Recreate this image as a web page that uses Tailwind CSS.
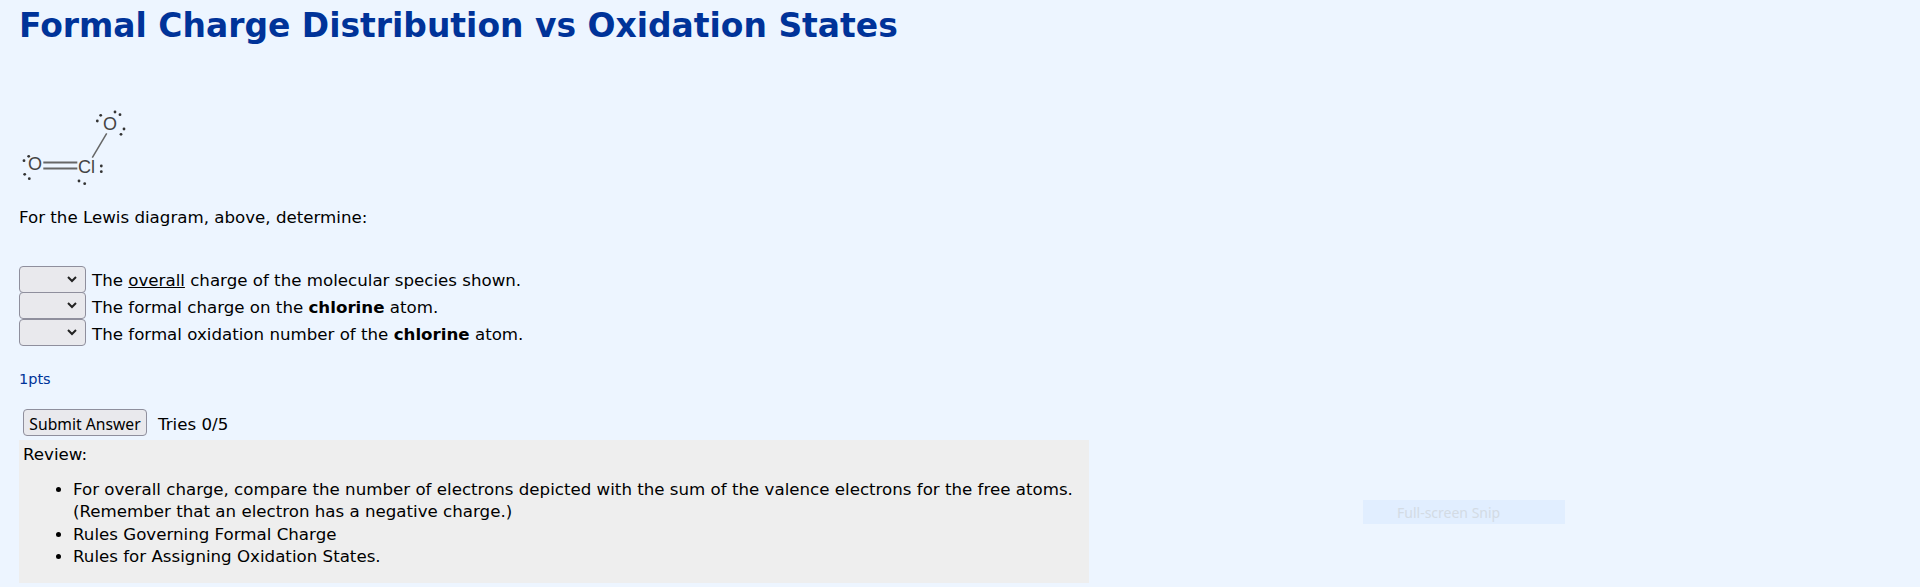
<!DOCTYPE html>
<html lang="en">
<head>
<meta charset="utf-8">
<script src="https://cdn.jsdelivr.net/npm/@tailwindcss/browser@4"></script>
<title>Formal Charge</title>
</head>
<body class="relative h-[587px] overflow-hidden bg-[#edf5ff] font-['DejaVu_Sans','Verdana',sans-serif] text-[16.67px] text-black">
<main class="pl-[19px]">
  <h1 class="pt-[5px] text-[32.95px] leading-[42px] font-bold text-[#003399]">Formal Charge Distribution vs Oxidation States</h1>
  <svg class="mt-[43px] -ml-[19px] block" width="160" height="110" viewBox="0 0 160 110">
    <g fill="#444" font-family="Liberation Sans, sans-serif" font-size="18">
      <text x="110" y="39.5" text-anchor="middle">O</text>
      <text x="35" y="80" text-anchor="middle">O</text>
      <text x="86.5" y="82.5" text-anchor="middle">Cl</text>
    </g>
    <g stroke="#666" fill="none">
      <path d="M43.3 72.5H77.3M43.3 78.5H77.3" stroke-width="1.8"/>
      <path d="M106.7 43.3L92.3 67.7" stroke-width="1.5"/>
    </g>
    <g fill="#333">
      <circle cx="97.3" cy="31" r="1.4"/><circle cx="100.7" cy="25.3" r="1.4"/><circle cx="115" cy="22" r="1.4"/><circle cx="120" cy="24.7" r="1.4"/><circle cx="124" cy="39" r="1.4"/><circle cx="121" cy="44.3" r="1.4"/>
      <circle cx="101.3" cy="76" r="1.4"/><circle cx="101.3" cy="81.7" r="1.4"/><circle cx="79" cy="91" r="1.4"/><circle cx="84.7" cy="93.7" r="1.4"/>
      <circle cx="24" cy="70.7" r="1.4"/><circle cx="28.7" cy="66.3" r="1.4"/><circle cx="24.7" cy="84.3" r="1.4"/><circle cx="29.3" cy="88.7" r="1.4"/>
    </g>
  </svg>
  <p class="mt-[5px] leading-[26px]">For the Lewis diagram, above, determine:</p>
  <div class="mt-[35px] flex flex-col">
    <div class="flex h-[26.5px] items-center gap-[6px]">
      <span class="relative block h-[27px] w-[67px] shrink-0">
        <select class="box-border block h-full w-full appearance-none rounded-[4px] border border-[#8f8f9d] bg-[#e9e9ed]" aria-label="Overall charge"></select>
        <svg class="pointer-events-none absolute top-[10px] left-[48px]" width="10" height="7" viewBox="0 0 10 7" fill="none" stroke="#222" stroke-width="2"><path d="M1 1l4 4 4-4"/></svg>
      </span>
      <span class="pt-[3px]">The <u>overall</u> charge of the molecular species shown.</span>
    </div>
    <div class="flex h-[26.5px] items-center gap-[6px]">
      <span class="relative block h-[27px] w-[67px] shrink-0">
        <select class="box-border block h-full w-full appearance-none rounded-[4px] border border-[#8f8f9d] bg-[#e9e9ed]" aria-label="Formal charge"></select>
        <svg class="pointer-events-none absolute top-[10px] left-[48px]" width="10" height="7" viewBox="0 0 10 7" fill="none" stroke="#222" stroke-width="2"><path d="M1 1l4 4 4-4"/></svg>
      </span>
      <span class="pt-[3px]">The formal charge on the <b>chlorine</b> atom.</span>
    </div>
    <div class="flex h-[26.5px] items-center gap-[6px]">
      <span class="relative block h-[27px] w-[67px] shrink-0">
        <select class="box-border block h-full w-full appearance-none rounded-[4px] border border-[#8f8f9d] bg-[#e9e9ed]" aria-label="Oxidation number"></select>
        <svg class="pointer-events-none absolute top-[10px] left-[48px]" width="10" height="7" viewBox="0 0 10 7" fill="none" stroke="#222" stroke-width="2"><path d="M1 1l4 4 4-4"/></svg>
      </span>
      <span class="pt-[4px]">The formal oxidation number of the <b>chlorine</b> atom.</span>
    </div>
  </div>
  <p class="mt-[23.5px] text-[14.5px] leading-[20px] text-[#003399]">1pts</p>
  <div class="mt-[20px] ml-[4px] flex h-[27px] items-center gap-[11px]">
    <button class="box-border h-[27px] w-[124px] rounded-[4px] border border-[#8f8f9d] bg-[#e9e9ed] pt-[2px] font-['Noto_Sans'] text-[15.7px] leading-[20px] whitespace-nowrap">Submit Answer</button>
    <span class="pt-[4px]">Tries 0/5</span>
  </div>
  <section class="mt-[4px] h-[143px] w-[1070px] bg-[#eeeeee] pt-[2px] pl-[4px]">
    <p class="leading-[26px]">Review:</p>
    <ul class="mt-[10.5px] list-disc pl-[50px] leading-[22.5px]">
      <li>For overall charge, compare the number of electrons depicted with the sum of the valence electrons for the free atoms. (Remember that an electron has a negative charge.)</li>
      <li>Rules Governing Formal Charge</li>
      <li>Rules for Assigning Oxidation States.</li>
    </ul>
  </section>
</main>
<div class="absolute top-[500px] left-[1363px] flex h-[24px] w-[202px] items-center bg-[#e1eeff] pl-[34px] font-['Noto_Sans'] text-[14px] text-[#d3dbe4]">Full-screen Snip</div>
</body>
</html>
